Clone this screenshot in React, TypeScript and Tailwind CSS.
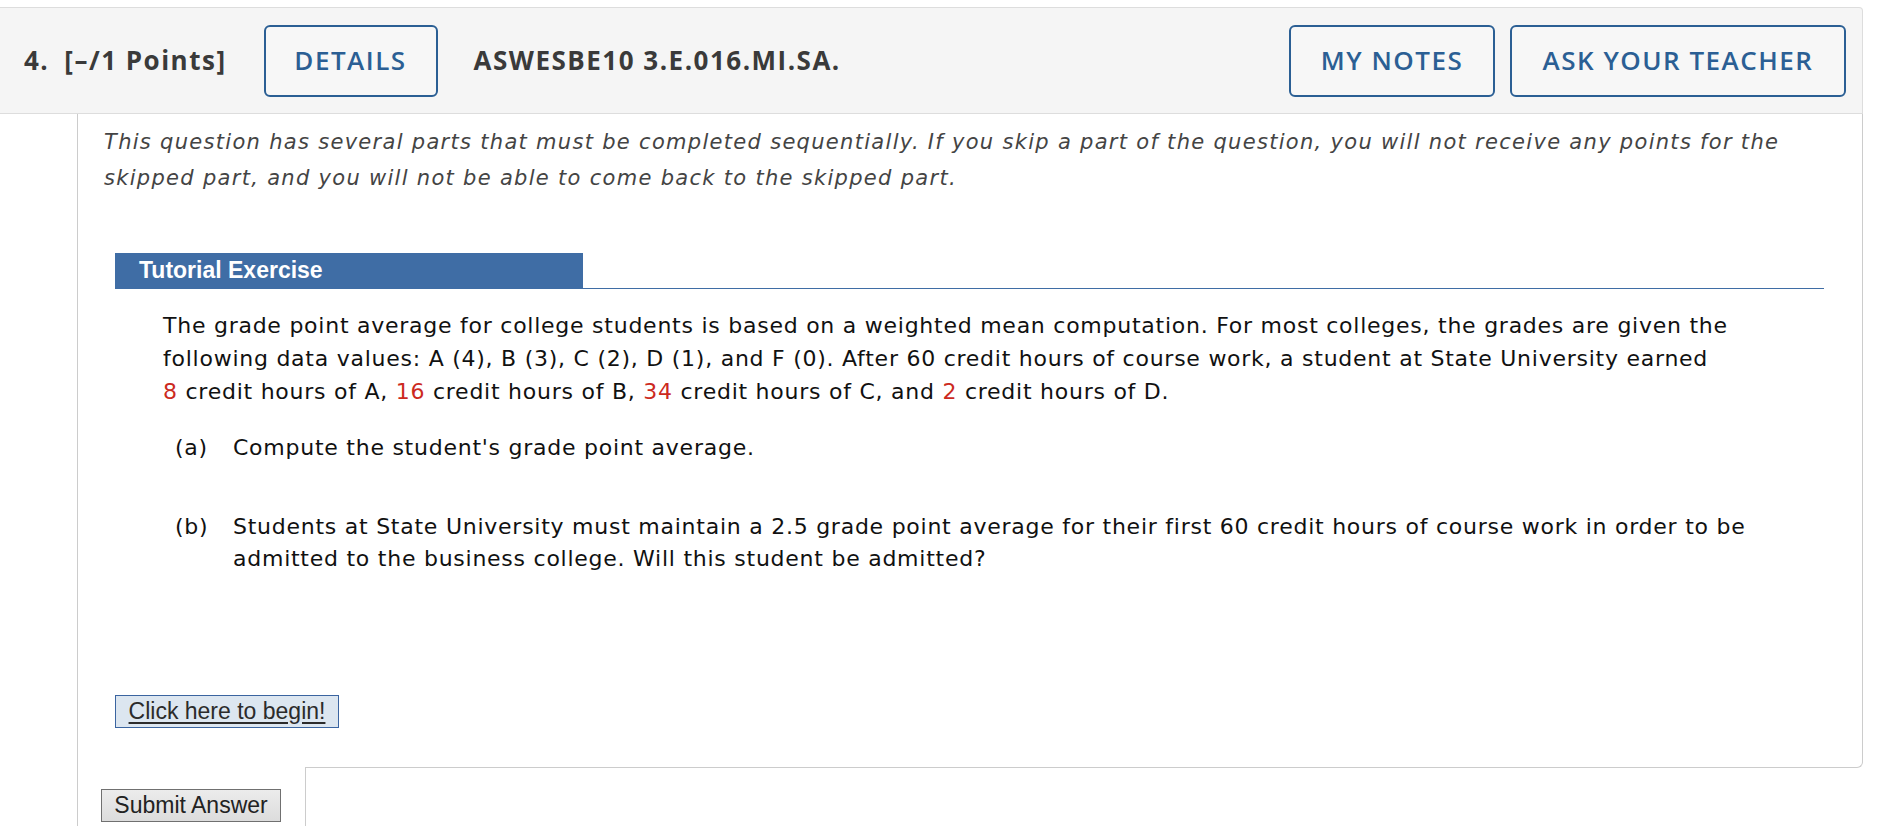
import React from 'react';

/* WebAssign-style question panel: header strip, tutorial exercise, submit tab */

const outlineBtn =
  "h-[72px] rounded-[6px] border-2 border-[#2b5f94] text-[#2b5f94] text-[26px] tracking-[1.5px] font-semibold flex items-center justify-center bg-[#f7f7f7]";

const Red = ({ children }: { children: React.ReactNode }) => (
  <span className="text-[#cc2a1e]">{children}</span>
);

export default function App() {
  return (
    <div className="w-[1888px] min-h-[826px] bg-white">
      {/* Header strip */}
      <div className="mt-[7px] w-[1863px] h-[107px] bg-[#f5f5f5] border-y border-r border-[#dddddd] rounded-tr-[4px] flex items-center pl-[24px] pr-[16px] font-['Open_Sans',sans-serif] text-[#3a3a3a]">
        <span className="text-[26px] font-bold tracking-[1.5px]">4.</span>
        <span className="ml-[15px] text-[26px] font-bold tracking-[1.5px]">[–/1 Points]</span>
        <button className={`${outlineBtn} ml-[37px] w-[174px]`}>DETAILS</button>
        <span className="ml-[36px] text-[26px] font-bold tracking-[1.5px]">ASWESBE10 3.E.016.MI.SA.</span>
        <div className="ml-auto flex gap-[15px]">
          <button className={`${outlineBtn} w-[206px]`}>MY NOTES</button>
          <button className={`${outlineBtn} w-[336px]`}>ASK YOUR TEACHER</button>
        </div>
      </div>

      {/* Question body */}
      <div className="ml-[77px] w-[1786px] border-l border-[#cccccc]">
        <div className="border-r border-b border-[#cccccc] rounded-br-[6px] pt-[10px] pl-[26px] pr-[30px] h-[654px]">
          <p className="font-['DejaVu_Sans',Verdana,sans-serif] italic text-[21px] tracking-[1.3px] leading-[36px] text-[#444444]">
            This question has several parts that must be completed sequentially. If you skip a part of the question, you will not receive any points for the skipped part, and you will not be able to come back to the skipped part.
          </p>

          {/* Tutorial exercise */}
          <div className="mt-[57px] ml-[11px] w-[1709px] border-b border-[#3f6da5]">
            <div className="w-[468px] h-[35px] bg-[#3f6da5] pl-[24px] flex items-center font-['Liberation_Sans',Arial,sans-serif] font-bold text-[23px] text-white">
              Tutorial Exercise
            </div>
          </div>

          <div className="ml-[59px] mr-[76px] font-['DejaVu_Sans',Verdana,sans-serif] text-[22px] tracking-[0.75px] leading-[33px] text-[#111111]">
            <p className="mt-[20px]">
              The grade point average for college students is based on a weighted mean computation. For most colleges, the grades are given the following data values: A (4), B (3), C (2), D (1), and F (0). After 60 credit hours of course work, a student at State University earned
              <br />
              <Red>8</Red> credit hours of A, <Red>16</Red> credit hours of B, <Red>34</Red> credit hours of C, and <Red>2</Red> credit hours of D.
            </p>
            <div className="mt-[23px] ml-[12px] flex">
              <span className="w-[58px] shrink-0">(a)</span>
              <span>Compute the student's grade point average.</span>
            </div>
            <div className="mt-[47px] ml-[12px] flex leading-[32px]">
              <span className="w-[58px] shrink-0">(b)</span>
              <span>
                Students at State University must maintain a 2.5 grade point average for their first 60 credit hours of course work in order to be admitted to the business college. Will this student be admitted?
              </span>
            </div>
          </div>

          <button className="mt-[120px] ml-[11px] w-[224px] h-[33px] bg-[#dce6f0] border border-[#3a64a0] font-['Liberation_Sans',Arial,sans-serif] text-[23px] leading-none text-[#2b2b2b] underline underline-offset-[3px] flex items-center justify-center">
            Click here to begin!
          </button>
        </div>

        {/* Submit tab */}
        <div className="relative -mt-px w-[228px] h-[60px] bg-white border-r border-[#cccccc] pt-[22px] pl-[23px]">
          <button className="w-[180px] h-[33px] bg-gradient-to-b from-[#ececec] to-[#dcdcdc] border border-[#707070] font-['Liberation_Sans',Arial,sans-serif] text-[23px] leading-none text-[#222222] flex items-center justify-center">
            Submit Answer
          </button>
        </div>
      </div>
    </div>
  );
}
